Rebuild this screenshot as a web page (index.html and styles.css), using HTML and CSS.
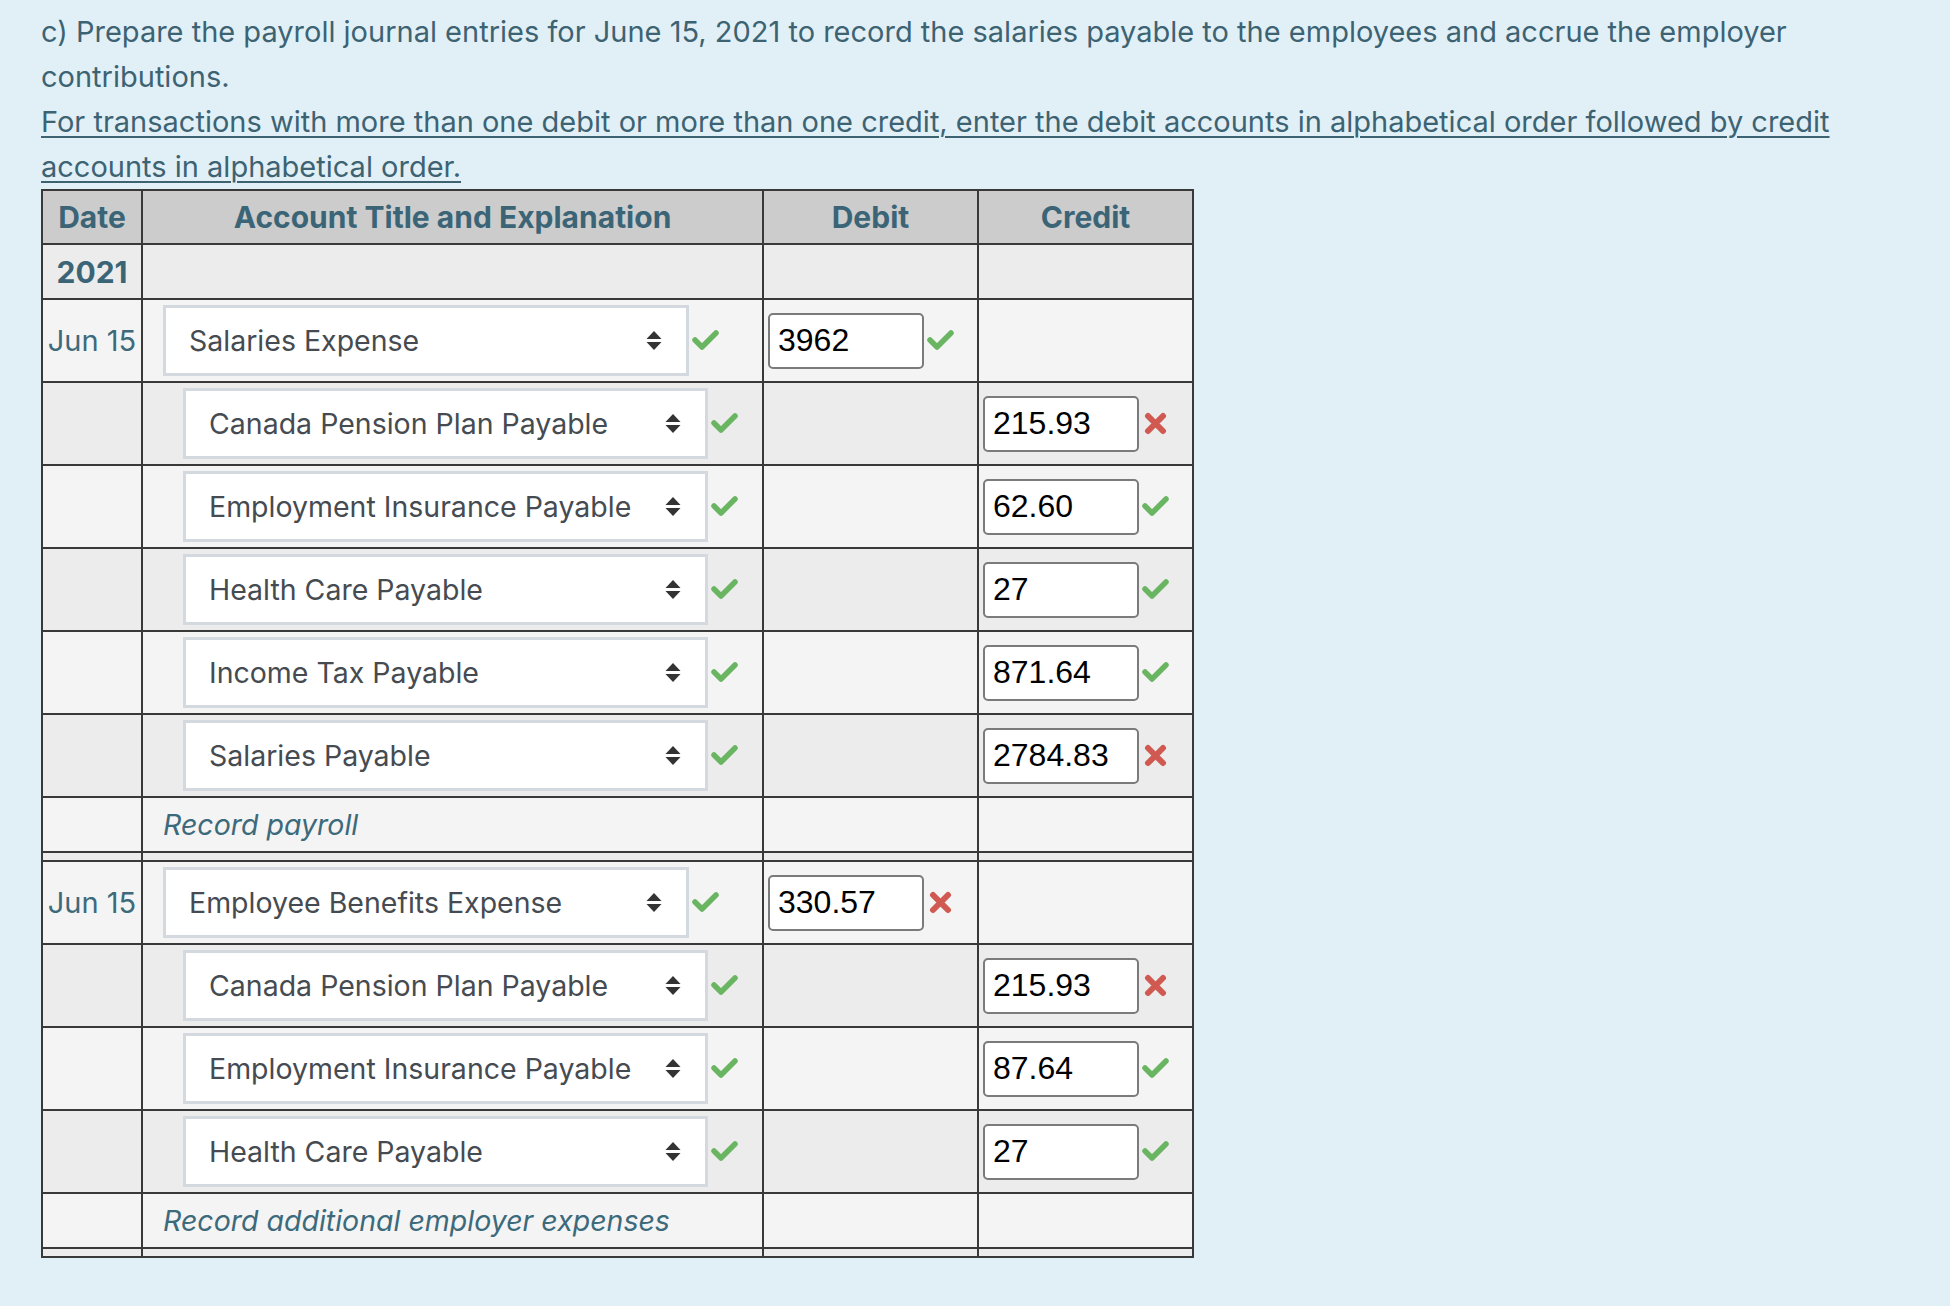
FILE: index.html
```html
<!DOCTYPE html>
<html lang="en">
<head>
<meta charset="utf-8">
<title>Payroll journal entries</title>
<link rel="stylesheet" href="styles.css">
</head>
<body>
<div class="page">
  <p class="intro">c) Prepare the payroll journal entries for June 15, 2021 to record the salaries payable to the employees and accrue the employer contributions.</p>
  <p class="note">For transactions with more than one debit or more than one credit, enter the debit accounts in alphabetical order followed by credit accounts in alphabetical order.</p>
  <table class="journal">
    <colgroup>
      <col class="c-date"><col class="c-acct"><col class="c-amt"><col class="c-amt">
    </colgroup>
    <thead>
      <tr><th>Date</th><th>Account Title and Explanation</th><th>Debit</th><th>Credit</th></tr>
    </thead>
    <tbody>
      <tr class="year"><td class="date">2021</td><td></td><td></td><td></td></tr>

      <tr class="entry">
        <td class="date day">Jun 15</td>
        <td><div class="acct"><div class="select"><span>Salaries Expense</span><svg class="arrows" viewBox="0 0 16 19" width="16" height="19"><path d="M8 0 L15.5 8 H0.5 Z M0.5 11 H15.5 L8 19 Z"/></svg></div><svg class="mark ok" viewBox="0 0 27 21" width="27" height="21"><path d="M3 10 L10 17 L24 3"/></svg></div></td>
        <td><div class="amt"><input type="text" value="3962" readonly><svg class="mark ok" viewBox="0 0 27 21" width="27" height="21"><path d="M3 10 L10 17 L24 3"/></svg></div></td>
        <td></td>
      </tr>
      <tr class="entry">
        <td></td>
        <td><div class="acct cr"><div class="select"><span>Canada Pension Plan Payable</span><svg class="arrows" viewBox="0 0 16 19" width="16" height="19"><path d="M8 0 L15.5 8 H0.5 Z M0.5 11 H15.5 L8 19 Z"/></svg></div><svg class="mark ok" viewBox="0 0 27 21" width="27" height="21"><path d="M3 10 L10 17 L24 3"/></svg></div></td>
        <td></td>
        <td><div class="amt"><input type="text" value="215.93" readonly><svg class="mark bad" viewBox="0 0 23 23" width="23" height="23"><path d="M4 4 L19 19 M19 4 L4 19"/></svg></div></td>
      </tr>
      <tr class="entry">
        <td></td>
        <td><div class="acct cr"><div class="select"><span>Employment Insurance Payable</span><svg class="arrows" viewBox="0 0 16 19" width="16" height="19"><path d="M8 0 L15.5 8 H0.5 Z M0.5 11 H15.5 L8 19 Z"/></svg></div><svg class="mark ok" viewBox="0 0 27 21" width="27" height="21"><path d="M3 10 L10 17 L24 3"/></svg></div></td>
        <td></td>
        <td><div class="amt"><input type="text" value="62.60" readonly><svg class="mark ok" viewBox="0 0 27 21" width="27" height="21"><path d="M3 10 L10 17 L24 3"/></svg></div></td>
      </tr>
      <tr class="entry">
        <td></td>
        <td><div class="acct cr"><div class="select"><span>Health Care Payable</span><svg class="arrows" viewBox="0 0 16 19" width="16" height="19"><path d="M8 0 L15.5 8 H0.5 Z M0.5 11 H15.5 L8 19 Z"/></svg></div><svg class="mark ok" viewBox="0 0 27 21" width="27" height="21"><path d="M3 10 L10 17 L24 3"/></svg></div></td>
        <td></td>
        <td><div class="amt"><input type="text" value="27" readonly><svg class="mark ok" viewBox="0 0 27 21" width="27" height="21"><path d="M3 10 L10 17 L24 3"/></svg></div></td>
      </tr>
      <tr class="entry">
        <td></td>
        <td><div class="acct cr"><div class="select"><span>Income Tax Payable</span><svg class="arrows" viewBox="0 0 16 19" width="16" height="19"><path d="M8 0 L15.5 8 H0.5 Z M0.5 11 H15.5 L8 19 Z"/></svg></div><svg class="mark ok" viewBox="0 0 27 21" width="27" height="21"><path d="M3 10 L10 17 L24 3"/></svg></div></td>
        <td></td>
        <td><div class="amt"><input type="text" value="871.64" readonly><svg class="mark ok" viewBox="0 0 27 21" width="27" height="21"><path d="M3 10 L10 17 L24 3"/></svg></div></td>
      </tr>
      <tr class="entry">
        <td></td>
        <td><div class="acct cr"><div class="select"><span>Salaries Payable</span><svg class="arrows" viewBox="0 0 16 19" width="16" height="19"><path d="M8 0 L15.5 8 H0.5 Z M0.5 11 H15.5 L8 19 Z"/></svg></div><svg class="mark ok" viewBox="0 0 27 21" width="27" height="21"><path d="M3 10 L10 17 L24 3"/></svg></div></td>
        <td></td>
        <td><div class="amt"><input type="text" value="2784.83" readonly><svg class="mark bad" viewBox="0 0 23 23" width="23" height="23"><path d="M4 4 L19 19 M19 4 L4 19"/></svg></div></td>
      </tr>
      <tr class="desc"><td></td><td><span class="expl">Record payroll</span></td><td></td><td></td></tr>
      <tr class="spacer"><td></td><td></td><td></td><td></td></tr>

      <tr class="entry">
        <td class="date day">Jun 15</td>
        <td><div class="acct"><div class="select"><span>Employee Benefits Expense</span><svg class="arrows" viewBox="0 0 16 19" width="16" height="19"><path d="M8 0 L15.5 8 H0.5 Z M0.5 11 H15.5 L8 19 Z"/></svg></div><svg class="mark ok" viewBox="0 0 27 21" width="27" height="21"><path d="M3 10 L10 17 L24 3"/></svg></div></td>
        <td><div class="amt"><input type="text" value="330.57" readonly><svg class="mark bad" viewBox="0 0 23 23" width="23" height="23"><path d="M4 4 L19 19 M19 4 L4 19"/></svg></div></td>
        <td></td>
      </tr>
      <tr class="entry">
        <td></td>
        <td><div class="acct cr"><div class="select"><span>Canada Pension Plan Payable</span><svg class="arrows" viewBox="0 0 16 19" width="16" height="19"><path d="M8 0 L15.5 8 H0.5 Z M0.5 11 H15.5 L8 19 Z"/></svg></div><svg class="mark ok" viewBox="0 0 27 21" width="27" height="21"><path d="M3 10 L10 17 L24 3"/></svg></div></td>
        <td></td>
        <td><div class="amt"><input type="text" value="215.93" readonly><svg class="mark bad" viewBox="0 0 23 23" width="23" height="23"><path d="M4 4 L19 19 M19 4 L4 19"/></svg></div></td>
      </tr>
      <tr class="entry">
        <td></td>
        <td><div class="acct cr"><div class="select"><span>Employment Insurance Payable</span><svg class="arrows" viewBox="0 0 16 19" width="16" height="19"><path d="M8 0 L15.5 8 H0.5 Z M0.5 11 H15.5 L8 19 Z"/></svg></div><svg class="mark ok" viewBox="0 0 27 21" width="27" height="21"><path d="M3 10 L10 17 L24 3"/></svg></div></td>
        <td></td>
        <td><div class="amt"><input type="text" value="87.64" readonly><svg class="mark ok" viewBox="0 0 27 21" width="27" height="21"><path d="M3 10 L10 17 L24 3"/></svg></div></td>
      </tr>
      <tr class="entry">
        <td></td>
        <td><div class="acct cr"><div class="select"><span>Health Care Payable</span><svg class="arrows" viewBox="0 0 16 19" width="16" height="19"><path d="M8 0 L15.5 8 H0.5 Z M0.5 11 H15.5 L8 19 Z"/></svg></div><svg class="mark ok" viewBox="0 0 27 21" width="27" height="21"><path d="M3 10 L10 17 L24 3"/></svg></div></td>
        <td></td>
        <td><div class="amt"><input type="text" value="27" readonly><svg class="mark ok" viewBox="0 0 27 21" width="27" height="21"><path d="M3 10 L10 17 L24 3"/></svg></div></td>
      </tr>
      <tr class="desc"><td></td><td><span class="expl">Record additional employer expenses</span></td><td></td><td></td></tr>
      <tr class="spacer"><td></td><td></td><td></td><td></td></tr>
    </tbody>
  </table>
</div>
</body>
</html>
```

FILE: styles.css
```css
html, body {
  margin: 0;
  padding: 0;
  background: #e1f0f7;
}

body {
  min-height: 1306px;
  font-family: Inter, "Noto Sans", "Liberation Sans", sans-serif;
  color: #3d6373;
}

.page {
  padding: 9px 0 40px 41px;
  width: 1895px;
}

.intro, .note {
  margin: 0;
  font-size: 29px;
  line-height: 45px;
}

.note {
  text-decoration: underline;
  text-decoration-thickness: 2px;
  text-underline-offset: 4px;
}

.journal {
  border-collapse: collapse;
  table-layout: fixed;
  width: 1152px;
  margin-top: 0;
}

.c-date { width: 100px; }
.c-acct { width: 621px; }
.c-amt { width: 215px; }

.journal th,
.journal td {
  border: 2px solid #393939;
  padding: 0;
  vertical-align: middle;
}

.journal th {
  background: #cccccc;
  height: 52px;
  font-size: 30px;
  font-weight: 700;
  color: #3b6577;
  text-align: center;
}

.journal tbody tr:nth-child(odd) td { background: #ececec; }
.journal tbody tr:nth-child(even) td { background: #f4f4f4; }

.year td { height: 53px; }

.date {
  text-align: center;
  font-size: 29px;
  white-space: nowrap;
}

.year .date {
  font-weight: 700;
  font-size: 30px;
  color: #3b6577;
}

.day {
  color: #3d6a7b;
}

.entry td { height: 81px; }

.acct {
  display: flex;
  align-items: center;
  padding-left: 20px;
}

.acct.cr {
  padding-left: 40px;
}

.select {
  box-sizing: border-box;
  width: 526px;
  height: 71px;
  background: #ffffff;
  border: 3px solid #d3d9de;
  display: flex;
  align-items: center;
  justify-content: space-between;
  padding: 0 24px 0 23px;
  font-size: 28.5px;
  color: #464b51;
}

.acct.cr .select {
  width: 525px;
}

.arrows {
  fill: #333333;
  flex: none;
}

.mark {
  flex: none;
  margin-left: 3px;
}

.mark.ok path {
  fill: none;
  stroke: #6ab562;
  stroke-width: 5.5;
  stroke-linecap: round;
  stroke-linejoin: round;
}

.mark.bad {
  margin-left: 5px;
}

.mark.bad path {
  fill: none;
  stroke: #d05a51;
  stroke-width: 6;
  stroke-linecap: round;
}

.amt {
  display: flex;
  align-items: center;
  padding-left: 4px;
}

.amt input {
  box-sizing: border-box;
  width: 156px;
  height: 56px;
  margin: 0;
  border: 2px solid #7b7b7b;
  border-radius: 5px;
  background: #ffffff;
  padding: 0 8px;
  font-family: "Liberation Sans", Arial, sans-serif;
  font-size: 32px;
  color: #000000;
  outline: none;
}

.desc td { height: 53px; }

.expl {
  display: block;
  padding-left: 20px;
  font-style: italic;
  font-size: 28.5px;
  color: #3d6a7b;
}

.spacer td { height: 7px; }
```
